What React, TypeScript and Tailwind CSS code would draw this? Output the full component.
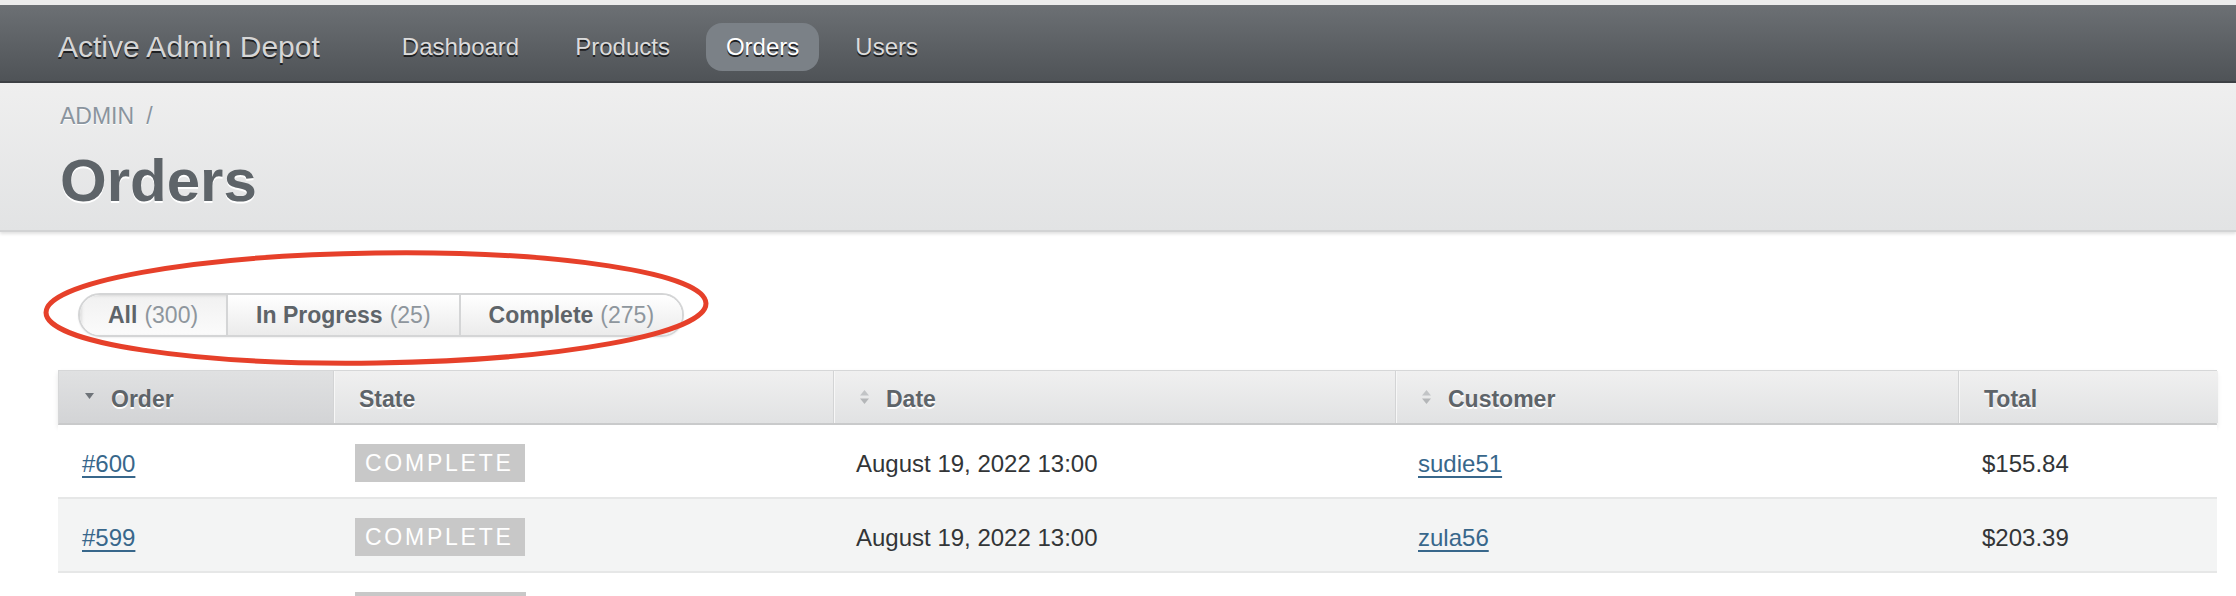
import React from "react";

type Row = { id: string; state: string; date: string; customer: string; total: string };

const rows: Row[] = [
  { id: "#600", state: "Complete", date: "August 19, 2022 13:00", customer: "sudie51", total: "$155.84" },
  { id: "#599", state: "Complete", date: "August 19, 2022 13:00", customer: "zula56", total: "$203.39" },
];

const navItems = ["Dashboard", "Products", "Orders", "Users"];
const cols = "grid-cols-[274px_500px_562px_563px_260px]";

function SortDown() {
  return (
    <svg width="9" height="6" viewBox="0 0 9 6" aria-hidden="true">
      <path d="M0 0h9L4.5 6z" fill="#6f7479" />
    </svg>
  );
}

function SortBoth() {
  return (
    <svg width="9" height="14" viewBox="0 0 9 14" aria-hidden="true">
      <path d="M4.5 0L9 5.5H0z" fill="#c2c4c6" />
      <path d="M0 8.5h9L4.5 14z" fill="#b4b6b8" />
    </svg>
  );
}

function HeaderCell({
  label,
  sort,
  active,
  first,
}: {
  label: string;
  sort?: "down" | "both";
  active?: boolean;
  first?: boolean;
}) {
  return (
    <div
      className={`flex h-full items-center pt-[4px] ${sort ? "pl-[26px]" : "pl-[25px]"} ${
        first ? "" : "border-l border-[#d3d4d5] shadow-[inset_1px_0_0_#f7f7f7]"
      } ${active ? "bg-gradient-to-b from-[#e0e1e2] to-[#d3d4d6]" : "bg-gradient-to-b from-[#f0f0f0] to-[#e1e2e3]"}`}
    >
      {sort === "down" && (
        <span className="mr-[17px] -mt-[6px] flex">
          <SortDown />
        </span>
      )}
      {sort === "both" && (
        <span className="mr-[17px] -mt-[4px] flex">
          <SortBoth />
        </span>
      )}
      <span className="text-[23px] font-bold text-[#5e6469] [text-shadow:0_2px_0_#ffffff]">{label}</span>
    </div>
  );
}

function StatusTag({ label }: { label: string }) {
  return (
    <span className="bg-[#c8c8c8] py-[6px] pl-[10px] pr-[11px] text-[23px] uppercase leading-[26px] tracking-[0.12em] text-white">
      {label}
    </span>
  );
}

export default function App() {
  return (
    <div className="min-h-screen bg-white font-['Liberation_Sans',Arial,sans-serif]">
      <div className="h-[5px] bg-[#ececec]" />

      <header className="flex h-[78px] items-center border-b-2 border-[#3e4145] bg-gradient-to-b from-[#6c7074] to-[#4f5357] pl-[58px] pt-[7px]">
        <h1 className="text-[30px] leading-none text-[#d6d6d6] [text-shadow:0_2px_0_#1e2022]">Active Admin Depot</h1>
        <nav className="ml-[62px] flex gap-[16px]">
          {navItems.map((item) => (
            <span
              key={item}
              className={`flex h-[48px] items-center rounded-[16px] px-[20px] text-[24px] [text-shadow:0_2px_0_#1e2022] ${
                item === "Orders" ? "bg-[#7b8187] text-white" : "text-[#dcdcdc]"
              }`}
            >
              {item}
            </span>
          ))}
        </nav>
      </header>

      <div className="border-b-2 border-[#d2d3d4] bg-gradient-to-b from-[#efefef] to-[#e2e3e4] pb-[19px] pl-[60px] pt-[22px] shadow-[0_2px_3px_rgba(0,0,0,0.12)]">
        <div className="text-[23px] leading-none text-[#8a949e] [text-shadow:0_1px_0_#ffffff]">
          <span>ADMIN</span>
          <span className="mx-[12px]">/</span>
        </div>
        <h2 className="mt-[23px] text-[60px] font-bold leading-none text-[#5e6469] [text-shadow:0_2px_0_#ffffff]">
          Orders
        </h2>
      </div>

      <main className="relative">
        <div className="ml-[78px] pt-[61px]">
          <div className="inline-flex h-[44px] overflow-hidden rounded-full border-2 border-[#d4d5d6] text-[23px] shadow-[0_1px_2px_rgba(0,0,0,0.06)]">
            <span className="flex items-center bg-gradient-to-b from-[#f1f1f1] to-[#fbfbfb] px-[28px] shadow-[inset_2px_1px_3px_rgba(0,0,0,0.1)]">
              <b className="text-[#5e6469]">All</b>
              <span className="ml-[7px] text-[#8e969d]">(300)</span>
            </span>
            <span className="flex items-center border-l-2 border-[#d4d5d6] bg-gradient-to-b from-white to-[#ebebeb] px-[28px]">
              <b className="text-[#5e6469]">In Progress</b>
              <span className="ml-[7px] text-[#8e969d]">(25)</span>
            </span>
            <span className="flex items-center border-l-2 border-[#d4d5d6] bg-gradient-to-b from-white to-[#ebebeb] px-[28px]">
              <b className="text-[#5e6469]">Complete</b>
              <span className="ml-[7px] text-[#8e969d]">(275)</span>
            </span>
          </div>
        </div>

        {/* hand-drawn annotation around the scopes */}
        <svg
          className="pointer-events-none absolute left-[40px] top-[13px]"
          width="675"
          height="126"
          viewBox="0 0 675 126"
          aria-hidden="true"
        >
          <ellipse
            cx="336"
            cy="63"
            rx="330"
            ry="55"
            fill="none"
            stroke="#e6402a"
            strokeWidth="5"
            transform="rotate(-0.8 336 63)"
          />
        </svg>

        <div className="ml-[58px] mt-[33px] w-[2159px]">
          <div
            className={`grid h-[55px] ${cols} border border-b-2 border-[#d6d7d8] border-b-[#c9cacb] shadow-[0_3px_5px_rgba(0,0,0,0.1)]`}
          >
            <HeaderCell label="Order" sort="down" active first />
            <HeaderCell label="State" />
            <HeaderCell label="Date" sort="both" />
            <HeaderCell label="Customer" sort="both" />
            <HeaderCell label="Total" />
          </div>

          {rows.map((row, i) => (
            <div
              key={row.id}
              className={`grid h-[74px] ${cols} border-b-2 border-[#e6e7e7] text-[24px] text-[#323537] ${
                i % 2 === 1 ? "bg-[#f3f4f4]" : "bg-white"
              }`}
            >
              <div className="flex items-center pl-[24px] pt-[5px]">
                <a href="#" className="text-[#38678b] underline decoration-2 underline-offset-[4px]">
                  {row.id}
                </a>
              </div>
              <div className="flex items-center pl-[23px] pt-[3px]">
                <StatusTag label={row.state} />
              </div>
              <div className="flex items-center pl-[24px] pt-[5px]">{row.date}</div>
              <div className="flex items-center pl-[24px] pt-[5px]">
                <a href="#" className="text-[#38678b] underline decoration-2 underline-offset-[4px]">
                  {row.customer}
                </a>
              </div>
              <div className="flex items-center pl-[25px] pt-[5px]">{row.total}</div>
            </div>
          ))}

          {/* next row, only its status tag peeks into view */}
          <div className={`grid h-[74px] ${cols} bg-white`}>
            <div />
            <div className="pl-[23px] pt-[19px]">
              <span className="block h-[38px] w-[171px] bg-[#c8c8c8]" />
            </div>
          </div>
        </div>
      </main>
    </div>
  );
}
